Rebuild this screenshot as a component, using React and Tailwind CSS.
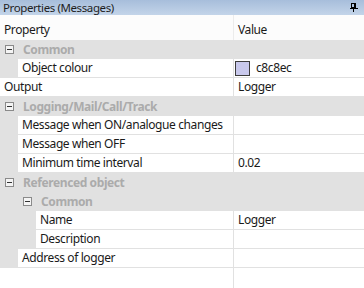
import React from 'react';

const rows = [
  { type: 'group', level: 0, label: 'Common' },
  { type: 'prop', level: 1, label: 'Object colour', value: 'c8c8ec', swatch: '#c8c8ec' },
  { type: 'prop', level: 0, label: 'Output', value: 'Logger' },
  { type: 'group', level: 0, label: 'Logging/Mail/Call/Track' },
  { type: 'prop', level: 1, label: 'Message when ON/analogue changes' },
  { type: 'prop', level: 1, label: 'Message when OFF' },
  { type: 'prop', level: 1, label: 'Minimum time interval', value: '0.02' },
  { type: 'group', level: 0, label: 'Referenced object' },
  { type: 'group', level: 1, label: 'Common' },
  { type: 'prop', level: 2, label: 'Name', value: 'Logger' },
  { type: 'prop', level: 2, label: 'Description' },
  { type: 'prop', level: 1, label: 'Address of logger' },
];

const indents = ['w-0', 'w-[18px]', 'w-[36px]'];

function Minus() {
  return (
    <svg width="9" height="9" viewBox="0 0 9 9" className="shrink-0">
      <rect x="0.5" y="0.5" width="8" height="8" fill="#f4f4f4" stroke="#8a8a8a" />
      <line x1="2" y1="4.5" x2="7" y2="4.5" stroke="#333" />
    </svg>
  );
}

function Pin() {
  return (
    <svg width="8" height="9" viewBox="0 0 8 9" className="mr-[6px]">
      <rect x="1.5" y="0.5" width="4" height="4" fill="none" stroke="#000" />
      <rect x="4" y="0" width="2" height="5" fill="#000" />
      <rect x="0" y="5" width="8" height="1" fill="#000" />
      <rect x="3" y="6" width="1" height="3" fill="#000" />
    </svg>
  );
}

export default function App() {
  return (
    <div
      className="w-[364px] h-[288px] flex flex-col bg-white text-[12px] tracking-[-0.4px] text-[#1a1a1a] overflow-hidden"
      style={{ fontFamily: '"Noto Sans", "DejaVu Sans", sans-serif' }}
    >
      {/* Title bar */}
      <div className="h-[15px] shrink-0 flex items-center justify-between bg-gradient-to-b from-[#a7bedb] to-[#c3d4e9] pl-[3px]">
        <span className="leading-none text-[11.5px] text-[#1e1e1e]">Properties (Messages)</span>
        <Pin />
      </div>

      {/* Header */}
      <div className="h-[25px] shrink-0 flex bg-[#fcfcfc]">
        <div className="w-[233px] flex items-center pl-[4px] pt-[4px]">Property</div>
        <div className="w-[1px] bg-[#ececec]" />
        <div className="flex-1 flex items-center pl-[4px] pt-[4px]">Value</div>
      </div>

      {/* Rows */}
      {rows.map((r, i) =>
        r.type === 'group' ? (
          <div key={i} className="h-[19px] shrink-0 flex items-center bg-[#e1e1e1]">
            <div className={indents[r.level]} />
            <div className="flex items-center pl-[5px]">
              <Minus />
              <span className="ml-[9px] font-bold text-[#ababab] leading-none">{r.label}</span>
            </div>
          </div>
        ) : (
          <div key={i} className="h-[19px] shrink-0 flex bg-[#e1e1e1]">
            <div className={indents[r.level]} />
            <div className="flex-1 h-[18px] bg-white flex items-center pl-[4px] whitespace-nowrap overflow-hidden">
              {r.label}
            </div>
            <div className="w-[130px] h-[18px] ml-[1px] bg-white flex items-center">
              {r.swatch ? (
                <>
                  <div className="w-[15px] h-[15px] ml-[1px] border border-[#3c3c3c] bg-[#c8c8ec]" />
                  <span className="ml-[6px]">{r.value}</span>
                </>
              ) : (
                <span className="ml-[4px]">{r.value}</span>
              )}
            </div>
          </div>
        )
      )}

      {/* Empty area below */}
      <div className="flex flex-1">
        <div className="w-[233px]" />
        <div className="w-[1px] bg-[#e1e1e1]" />
      </div>
    </div>
  );
}
